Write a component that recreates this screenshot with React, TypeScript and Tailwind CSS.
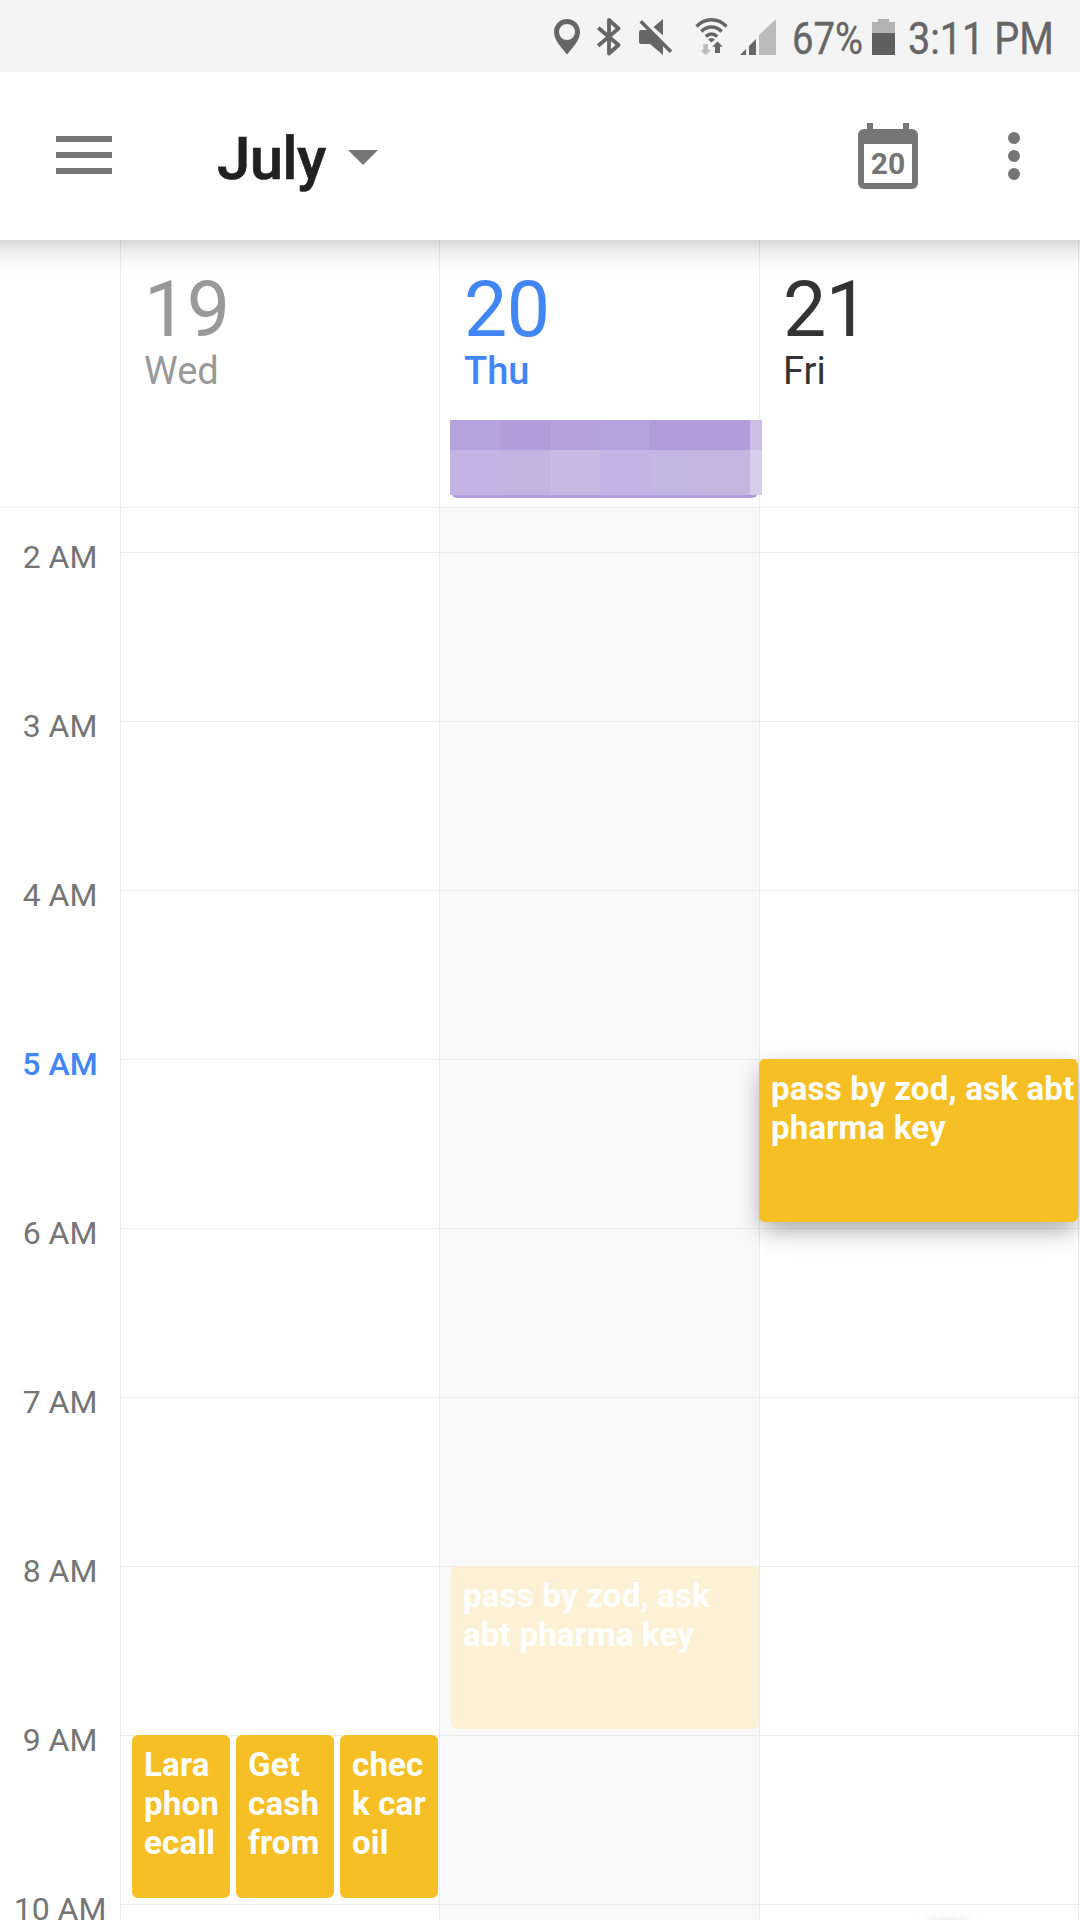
import type { ReactNode } from 'react';

type CalendarEvent = {
  title: string;
  className: string;
};

type Day = {
  date: number;
  name: string;
  headerClass: string;
  nameClass: string;
  widthClass: string;
  isToday?: boolean;
  events: CalendarEvent[];
};

const HOURS = ['2 AM', '3 AM', '4 AM', '5 AM', '6 AM', '7 AM', '8 AM', '9 AM', '10 AM'];
const ACTIVE_HOUR = '5 AM';

const DAYS: Day[] = [
  {
    date: 19,
    name: 'Wed',
    headerClass: 'text-[#999999]',
    nameClass: 'font-normal',
    widthClass: 'w-[319px] pl-[23px]',
    events: [
      { title: 'Lara phonecall', className: 'left-[11px] top-[1227px] w-[98px] bg-[#f6bf26] pr-2' },
      { title: 'Get cash from', className: 'left-[115px] top-[1227px] w-[98px] bg-[#f6bf26] pr-2' },
      { title: 'check car oil', className: 'left-[219px] top-[1227px] w-[98px] bg-[#f6bf26] pr-2' },
    ],
  },
  {
    date: 20,
    name: 'Thu',
    headerClass: 'text-[#4285f4]',
    nameClass: 'font-medium',
    widthClass: 'w-[320px] pl-6',
    isToday: true,
    events: [
      { title: 'pass by zod, ask abt pharma key', className: 'left-[11px] top-[1058px] w-[308px] bg-[#fdf1d5] pr-3' },
    ],
  },
  {
    date: 21,
    name: 'Fri',
    headerClass: 'text-[#333333]',
    nameClass: 'font-normal',
    widthClass: 'w-[319px] pl-[23px]',
    events: [
      {
        title: 'pass by zod, ask abt pharma key',
        className:
          '-left-px top-[551px] w-[319px] bg-[#f6bf26] shadow-[0_14px_24px_-4px_rgba(0,0,0,0.26),0_2px_20px_rgba(0,0,0,0.12)]',
      },
    ],
  },
];

const MOSAIC_TOP = ['bg-[#b6a2dc]', 'bg-[#b29cda]', 'bg-[#b5a0db]', 'bg-[#b5a1db]', 'bg-[#b19bd9]', 'bg-[#b29cda]'];
const MOSAIC_BOTTOM = ['bg-[#c4b3e4]', 'bg-[#c4b2e0]', 'bg-[#c8b8e3]', 'bg-[#c4b3e4]', 'bg-[#c5b5e2]', 'bg-[#c6b5e1]'];

function StatusBar() {
  return (
    <div className="flex h-[72px] shrink-0 items-start bg-[#f4f4f4] pl-[554px] text-[#666666]">
      <svg className="mt-[19px] h-9 w-[26px] shrink-0" viewBox="0 0 26 36" fill="currentColor">
        <path
          fillRule="evenodd"
          d="M13 0C5.6 0 0 5.7 0 13c0 8 7 15 13 22.500 6-7.500 13-14.500 13-22.500C26 5.700 20.400 0 13 0Zm0 5a8 8 0 1 1 0 16 8 8 0 0 1 0-16Z"
        />
      </svg>
      <svg
        className="ml-[17px] mt-[18px] h-[38px] w-6 shrink-0"
        viewBox="0 0 24 38"
        fill="none"
        stroke="currentColor"
        strokeWidth="3.800"
        strokeLinejoin="round"
      >
        <path d="M1.200 9.800 21.500 27 12 35.500V2l9.500 8.500L1.200 27.800" />
      </svg>
      <svg className="ml-[18px] mt-[19px] h-[37px] w-[34px] shrink-0" viewBox="0 0 34 37" fill="currentColor">
        <path d="M0 13q0-2 2-2h7.500L24 26v10L11 25H2q-2 0-2-2ZM14.500 8 24 0v16.500Z" />
        <path d="M1.700 2.300 32 32.800" fill="none" stroke="currentColor" strokeWidth="3.500" />
      </svg>
      <svg className="ml-[22px] mt-[17px] h-[38px] w-[33px] shrink-0" viewBox="0 0 33 38" fill="none">
        <g stroke="currentColor" strokeWidth="3.400">
          <path d="M1.500 9.500Q8 2.700 16.500 2.700T31.500 9.500" />
          <path d="M6.300 14.500Q10.800 10 16.500 10T26.700 14.500" />
          <path d="M10.800 19.500Q13.500 17 16.500 17T22.200 19.500" />
        </g>
        <path d="M16.500 25.500 13 22.500q3.500-3 7 0Z" fill="currentColor" />
        <path d="M8.300 27h4.700v6h3l-5.300 5.200L5.500 33h2.800Z" fill="#bbbbbb" />
        <path d="M20 36h5v-6.300h2.800L22.500 24.500 17.200 29.700H20Z" fill="currentColor" />
      </svg>
      <svg className="ml-3 mt-[19px] h-9 w-9 shrink-0" viewBox="0 0 36 36" fill="currentColor">
        <path d="M0 36 6 30v6ZM9 27l7-7v16H9Z" />
        <path d="M19 16 36 0v36H19Z" fill="#bbbbbb" />
      </svg>
      <span className="ml-4 mt-3 w-[72px] shrink-0 origin-left scale-x-[0.85] whitespace-nowrap text-[45px] leading-[53px] [-webkit-text-stroke:0.4px]">
        67%
      </span>
      <svg className="ml-2 mt-[19px] h-9 w-[23px] shrink-0" viewBox="0 0 23 36">
        <path d="M0 3h6V0h11v3h6v11H0Z" fill="#b3b3b3" />
        <path d="M0 14h23v22H0Z" fill="#5f5f5f" />
      </svg>
      <span className="ml-[13px] mt-3 shrink-0 origin-left scale-x-[0.88] whitespace-nowrap text-[45px] leading-[53px] [-webkit-text-stroke:0.4px]">
        3:11 PM
      </span>
    </div>
  );
}

function AppBar() {
  return (
    <header className="relative z-10 flex h-[168px] shrink-0 items-start bg-white text-[#757575]">
      <button className="ml-14 mt-16 flex w-14 flex-col gap-2.5">
        <span className="h-1.5 bg-current" />
        <span className="h-1.5 bg-current" />
        <span className="h-1.5 bg-current" />
      </button>
      <button className="ml-[105px] mt-[52px] flex w-[161px] items-start justify-between">
        <span className="text-[60px] font-medium leading-[70px] tracking-[-0.7px] text-[#212121] [-webkit-text-stroke:0.6px]">
          July
        </span>
        <svg className="mt-[26px] h-[15px] w-[30px]" viewBox="0 0 30 15" fill="currentColor">
          <path d="M0 0h30L15 15Z" />
        </svg>
      </button>
      <button className="ml-auto mt-[51px] flex w-15 flex-col">
        <span className="flex h-1.5 justify-between px-[9px]">
          <span className="w-1.5 bg-current" />
          <span className="w-1.5 bg-current" />
        </span>
        <span className="flex h-15 items-center justify-center rounded-md border-x-6 border-b-6 border-t-15 border-current text-[30px] font-bold leading-[39px]">
          20
        </span>
      </button>
      <button className="ml-[90px] mr-[60px] mt-[60px] flex w-3 flex-col gap-1.5">
        <span className="size-3 rounded-full bg-current" />
        <span className="size-3 rounded-full bg-current" />
        <span className="size-3 rounded-full bg-current" />
      </button>
      <div className="absolute inset-x-0 top-full h-9 bg-[linear-gradient(to_bottom,rgba(0,0,0,0.155)_0px,rgba(0,0,0,0.075)_10px,rgba(0,0,0,0.025)_22px,transparent_36px)]" />
    </header>
  );
}

function AllDayChip() {
  return (
    <div className="absolute left-2.5 top-[180px] z-[1] h-[78px] w-[312px]">
      <div className="absolute inset-y-0 left-px w-[307px] rounded-md bg-[#b39ddb]" />
      <div className="relative flex h-[30px]">
        {MOSAIC_TOP.map((color, i) => (
          <span key={i} className={`w-[50px] ${color}`} />
        ))}
        <span className="w-3 bg-[#cebee5]" />
      </div>
      <div className="relative flex h-[45px]">
        {MOSAIC_BOTTOM.map((color, i) => (
          <span key={i} className={`w-[50px] ${color}`} />
        ))}
        <span className="w-3 bg-[#d9cdec]" />
      </div>
    </div>
  );
}

function DayHeader({ day }: { day: Day }) {
  return (
    <div className={`relative border-l border-[#ebebeb] pt-[31px] ${day.widthClass}`}>
      <div className={`text-[77px] leading-[78px] tracking-[-0.4px] ${day.headerClass}`}>{day.date}</div>
      <div className={`text-[38px] leading-[45px] ${day.headerClass} ${day.nameClass}`}>{day.name}</div>
      {day.isToday && <AllDayChip />}
    </div>
  );
}

function HourLines() {
  return (
    <>
      <div className="h-11" />
      {HOURS.map((hour) => (
        <div key={hour} className="h-[169px] border-t border-[#ebebeb]" />
      ))}
    </>
  );
}

function EventCard({ className, children }: { className: string; children: ReactNode }) {
  return (
    <div
      className={`absolute h-[163px] overflow-hidden rounded-md pl-3 pt-[10px] text-[33px] font-bold leading-[39px] tracking-[0.2px] wrap-anywhere text-white ${className}`}
    >
      {children}
    </div>
  );
}

export default function App() {
  return (
    <div className="relative flex h-[1920px] w-[1080px] flex-col overflow-hidden bg-white font-['Roboto',sans-serif]">
      <StatusBar />
      <AppBar />

      <div className="flex h-[268px] shrink-0 border-b border-[#ebebeb]">
        <div className="w-[120px] shrink-0" />
        {DAYS.map((day) => (
          <DayHeader key={day.date} day={day} />
        ))}
        <div className="w-0.5 border-l border-[#ebebeb]" />
      </div>

      <div className="flex h-[1412px] overflow-hidden">
        <div className="w-[120px] shrink-0 pt-[30px] text-center text-[32px] leading-[39px]">
          {HOURS.map((hour) => (
            <div
              key={hour}
              className={`h-[169px] ${hour === ACTIVE_HOUR ? 'font-medium text-[#4285f4]' : 'text-[#757575]'}`}
            >
              {hour}
            </div>
          ))}
        </div>
        {DAYS.map((day) => (
          <div
            key={day.date}
            className={`relative shrink-0 border-l border-[#ebebeb] ${day.isToday ? 'w-[320px] bg-[#f9f9f9]' : 'w-[319px]'}`}
          >
            <HourLines />
            {day.events.map((event) => (
              <EventCard key={event.title} className={event.className}>
                {event.title}
              </EventCard>
            ))}
          </div>
        ))}
        <div className="w-0.5 border-l border-[#ebebeb]">
          <HourLines />
        </div>
      </div>

      {/* floating button, mostly scrolled out with only its shadow showing */}
      <div className="absolute left-[864px] top-[1924px] size-[168px] rounded-full shadow-[0_0_12px_rgba(0,0,0,0.25)]" />
    </div>
  );
}
